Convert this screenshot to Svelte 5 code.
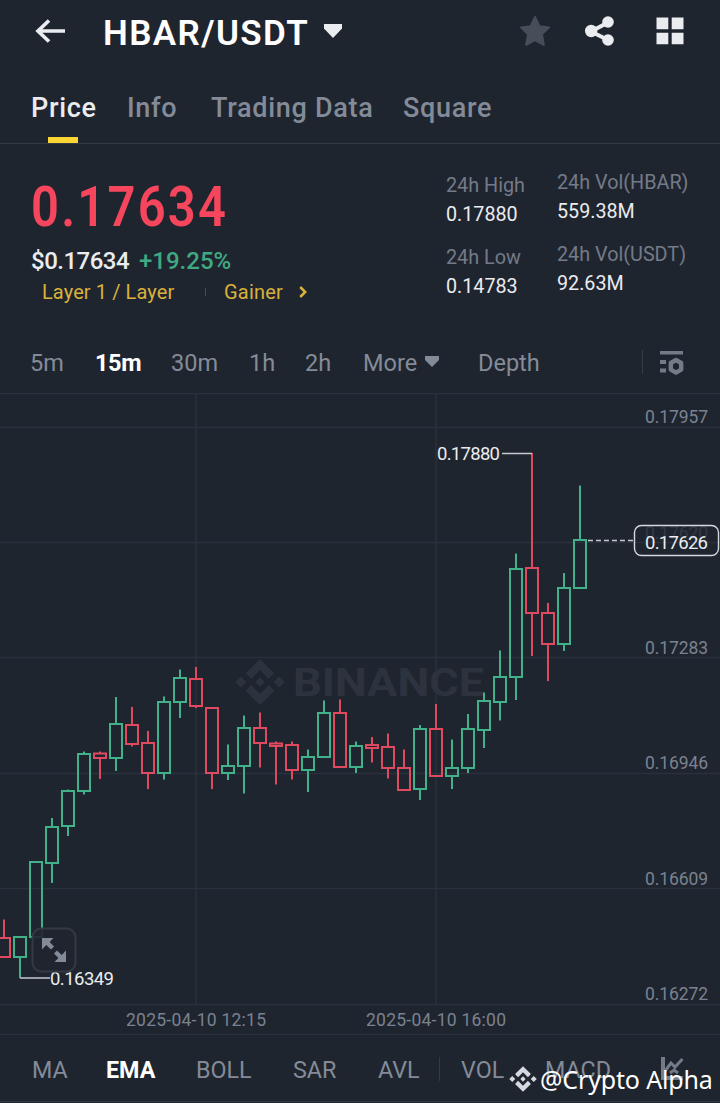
<script lang="ts">
	type Candle = [high: number, top: number, bottom: number, low: number, up: 0 | 1];

	const tabs = [
		{ label: 'Price', width: 96 },
		{ label: 'Info', width: 84 },
		{ label: 'Trading Data', width: 192 },
		{ label: 'Square', width: 100 },
	];

	const stats = [
		[['24h High', '0.17880'], ['24h Low', '0.14783']],
		[['24h Vol(HBAR)', '559.38M'], ['24h Vol(USDT)', '92.63M']],
	];

	const intervals = [
		{ label: '5m', width: 65 },
		{ label: '15m', width: 76 },
		{ label: '30m', width: 78 },
		{ label: '1h', width: 56 },
		{ label: '2h', width: 58 },
		{ label: 'More', width: 115 },
		{ label: 'Depth', width: 80 },
	];

	const indicators = [
		{ label: 'MA', width: 74 },
		{ label: 'EMA', width: 90 },
		{ label: 'BOLL', width: 97 },
		{ label: 'SAR', width: 85 },
		{ label: 'AVL', width: 61 },
		{ label: 'VOL', width: 84 },
		{ label: 'MACD', width: 80 },
	];

	const chartTop = 393;
	const step = 16;

	const candles: Candle[] = [
		[919.5, 938, 957, 957, 0],
		[936, 937, 957, 978, 1],
		[861, 862, 937, 937, 1],
		[818, 827, 863, 883, 1],
		[789.5, 791, 826, 836, 1],
		[751.5, 754, 791, 794.5, 1],
		[751.5, 753.5, 758, 779, 0],
		[697, 724, 758, 771, 1],
		[707, 725, 744, 746.5, 0],
		[731, 743, 773, 789, 0],
		[696.5, 702, 773, 779.5, 1],
		[669.5, 678, 702, 718, 1],
		[667, 679, 706, 708, 0],
		[707, 708, 773, 789, 0],
		[744.5, 766, 773, 780, 1],
		[715.5, 728, 766, 793.5, 1],
		[712.5, 728, 743, 767.5, 0],
		[741.5, 743.5, 746, 784.5, 0],
		[741.5, 745, 770, 779.5, 0],
		[749.5, 757, 770, 792, 1],
		[700.5, 713, 757, 757, 1],
		[699.5, 713, 767, 767, 0],
		[741.5, 746, 767, 773, 1],
		[737, 745, 748, 762.5, 0],
		[733.5, 747, 768, 778.5, 0],
		[749.5, 768, 790, 790, 0],
		[725, 729, 789, 800, 1],
		[704, 729, 776, 776, 0],
		[739.5, 768, 776, 789, 1],
		[714, 729, 768, 773, 1],
		[692.5, 701, 730, 748, 1],
		[650.5, 677, 702, 720.5, 1],
		[553.5, 569, 677, 700, 1],
		[453, 568, 613, 656, 0],
		[603, 613, 644, 681, 0],
		[573, 588, 644, 651, 1],
		[485.5, 540, 588, 588, 1],
	];

	const prices = [
		{ label: '0.17957', y: 427 },
		{ label: '0.17620', y: 542.5 },
		{ label: '0.17283', y: 657.8 },
		{ label: '0.16946', y: 773 },
		{ label: '0.16609', y: 888.5 },
		{ label: '0.16272', y: 1004 },
	];

	const times = [
		{ label: '2025-04-10 12:15', x: 196 },
		{ label: '2025-04-10 16:00', x: 436 },
	];

	let activeTab = $state('Price');
	let activeInterval = $state('15m');
	let activeIndicator = $state('EMA');
</script>

{#snippet logo()}
	<path d="M12 1 18.8 7.8 16.2 10.4 12 6.2 7.8 10.4 5.2 7.8Z" />
	<path d="M12 23 18.8 16.2 16.2 13.6 12 17.8 7.8 13.6 5.2 16.2Z" />
	<path d="M12 9.7 14.3 12 12 14.3 9.7 12ZM2.8 9.4 5.4 12 2.8 14.6 .2 12ZM21.2 9.4 23.8 12 21.2 14.6 18.6 12Z" />
{/snippet}

<main class="screen">
	<header class="topbar">
		<svg class="back" width="32" height="26" viewBox="0 0 32 26">
			<path d="M31 13H4M15 2.5 4 13 15 23.5" />
		</svg>
		<h1>HBAR/USDT</h1>
		<svg class="caret" width="20" height="15" viewBox="0 0 20 15">
			<path d="M1 0H19V4.5L10 14 1 4.5Z" />
		</svg>
		<div class="actions">
			<svg width="32" height="32" viewBox="0 0 32 32">
				<path class="star" d="M16 2 20.4 11.2 30 12.4 22.9 19.3 24.8 29.8 16 25.2 7.2 29.8 9.1 19.3 2 12.4 11.6 11.2Z" />
			</svg>
			<svg class="share" width="32" height="32" viewBox="0 0 32 32">
				<path class="link" d="M24 7.5 7 16.5 24 25" />
				<circle cx="24" cy="7" r="5.8" /><circle cx="7.2" cy="16" r="6.2" /><circle cx="24" cy="25" r="5.8" />
			</svg>
			<svg width="28" height="28" viewBox="0 0 28 28">
				<path d="M.5 .5H12.3V12.3H.5ZM15.7 .5H27.5V12.3H15.7ZM.5 15.7H12.3V27.3H.5ZM15.7 15.7H27.5V27.3H15.7Z" />
			</svg>
		</div>
	</header>

	<nav class="tabs">
		{#each tabs as tab}
			<button class:active={activeTab === tab.label} style="width:{tab.width}px" onclick={() => (activeTab = tab.label)}>
				<span>{tab.label}</span>
			</button>
		{/each}
	</nav>

	<section class="summary">
		<div class="quote">
			<div class="price">0.17634</div>
			<div class="change"><span class="usd">$0.17634</span><span class="pct">+19.25%</span></div>
			<div class="tags">
				<span class="layer">Layer 1 / Layer</span>
				<i></i>
				<span class="gainer">Gainer</span>
				<svg width="8" height="12" viewBox="0 0 8 12"><path d="M1.2 1 6.2 6 1.2 11" /></svg>
			</div>
		</div>
		{#each stats as column}
			<dl>
				{#each column as [name, value]}
					<dt>{name}</dt>
					<dd>{value}</dd>
				{/each}
			</dl>
		{/each}
	</section>

	<nav class="intervals">
		{#each intervals as item}
			<button class:active={activeInterval === item.label} style="width:{item.width}px" onclick={() => (activeInterval = item.label)}>
				{item.label}
				{#if item.label === 'More'}
					<svg width="14" height="11" viewBox="0 0 14 11"><path d="M0 0H14V4L7 11 0 4Z" /></svg>
				{/if}
			</button>
		{/each}
		<svg class="settings" width="44" height="28" viewBox="0 0 44 28">
			<path class="rule" d="M.5 2V26" />
			<path d="M18 3H41V6.6H18ZM18 12H24V16H18ZM18 20.5H24V24.5H18Z" />
			<path class="nut" d="M34 12 39.2 15V21.6L34 24.6 28.8 21.6V15Z" />
		</svg>
	</nav>

	<svg class="chart" width="720" height="642" viewBox="0 {chartTop} 720 642">
		<g class="grid">
			<path d="M0 393.5H720" />
			{#each prices as p}
				<path d="M0 {Math.floor(p.y)}.5H720" />
			{/each}
			{#each times as t}
				<path d="M{t.x} 393V1004" />
			{/each}
			<path d="M0 1034.5H720" />
		</g>

		<svg class="watermark" x="235" y="657" width="50" height="50" viewBox="0 0 24 24">{@render logo()}</svg>
		<text class="watermark brand" x="293" y="696" textLength="191" lengthAdjust="spacingAndGlyphs">BINANCE</text>

		{#each candles as [high, top, bottom, low, up], i}
			{@const x = 4 + i * step}
			<g class={up ? 'up' : 'down'}>
				<path d="M{x} {high}V{top}M{x} {bottom}V{low}" />
				<rect x={x - 6} y={top} width="12" height={bottom - top} />
			</g>
		{/each}

		{#each prices as p}
			<text class="axis" class:faint={p.label === '0.17620'} x="645" y={p.y - 4} textLength="63">{p.label}</text>
		{/each}
		{#each times as t}
			<text class="axis" x={t.x - 70} y="1026" textLength="140">{t.label}</text>
		{/each}

		<path class="leader" d="M502 453.5H532M20 978H50" />
		<text class="mark" x="437" y="460" textLength="63">0.17880</text>
		<text class="mark" x="50" y="985" textLength="64">0.16349</text>

		<path class="leader dashed" d="M588 540.5H634" />
		<rect class="tag" x="634.5" y="525.5" width="84" height="30" rx="7" />
		<text class="mark" x="645" y="549" textLength="63">0.17626</text>

		<g class="expand">
			<rect x="32.5" y="928.5" width="43" height="43" rx="9" />
			<path d="M42 938H53.5L49.6 942 54 946.5 51 949.5 46.3 945 42 949.5ZM66 962H54.5L58.4 958 54 953.5 57 950.5 61.7 955 66 950.5Z" />
		</g>
	</svg>

	<footer>
		{#each indicators as item}
			{#if item.label === 'VOL'}<i></i>{/if}
			<button class:active={activeIndicator === item.label} style="width:{item.width}px" onclick={() => (activeIndicator = item.label)}>
				{item.label}
			</button>
		{/each}
		<svg class="trend" width="24" height="24" viewBox="0 0 24 24">
			<path class="frame" d="M2 0V21H22" />
			<path d="M4 14 10 6 14 10 21.5 2M9 16 13 13 17 16" />
		</svg>
		<div class="credit">
			<svg width="28" height="28" viewBox="0 0 24 24">{@render logo()}</svg>
			<span>@Crypto Alpha</span>
		</div>
	</footer>
</main>

<style>
	:global(body) {
		background: #1f252f;
	}
	.screen {
		width: 720px;
		height: 1103px;
		overflow: hidden;
		background: #1f252f;
		color: #eaecef;
		font-family: Roboto, 'Liberation Sans', sans-serif;
		display: flex;
		flex-direction: column;
	}
	button {
		padding: 0;
		border: 0;
		background: none;
		color: #848b98;
		font: inherit;
		letter-spacing: inherit;
		text-align: left;
		white-space: nowrap;
		flex: none;
	}
	svg {
		display: block;
		flex: none;
	}
	.topbar {
		box-sizing: border-box;
		height: 63px;
		display: flex;
		align-items: center;
		padding: 0 36px 1px 34px;
	}
	.back path {
		fill: none;
		stroke: #eaecef;
		stroke-width: 3.7;
	}
	h1 {
		margin: 4px 0 0 37px;
		width: 220px;
		font-size: 35px;
		font-weight: 600;
		letter-spacing: 1.4px;
		color: #fff;
	}
	.caret { fill: #eaecef; }
	.actions {
		margin-left: auto;
		display: flex;
		align-items: center;
		gap: 33px;
		fill: #eaecef;
	}
	.share { margin-right: 7px; }
	.star {
		fill: #474d59;
		stroke: #474d59;
		stroke-width: 2;
		stroke-linejoin: round;
	}
	.link {
		fill: none;
		stroke: #eaecef;
		stroke-width: 4;
	}
	.tabs {
		box-sizing: border-box;
		height: 81px;
		display: flex;
		padding-left: 31px;
		border-bottom: 1px solid #343a45;
		font-size: 27px;
		font-weight: 500;
		letter-spacing: 0.7px;
	}
	.tabs button {
		position: relative;
		padding-top: 10px;
	}
	.tabs .active { color: #eaecef; }
	.tabs .active::after {
		content: '';
		position: absolute;
		left: 17px;
		bottom: 0;
		width: 30px;
		height: 6px;
		background: #fcd535;
	}
	.summary {
		height: 188px;
		display: flex;
	}
	.quote {
		width: 415px;
		padding: 31px 0 0 31px;
	}
	.price {
		width: fit-content;
		font-size: 55.5px;
		line-height: 66px;
		font-weight: 600;
		letter-spacing: 2.5px;
		color: #f6465d;
		transform: scaleX(0.882);
		transform-origin: left;
	}
	.change {
		display: flex;
		margin-top: 5px;
		font-size: 24px;
		line-height: 30px;
		font-weight: 500;
	}
	.usd {
		width: 108px;
		letter-spacing: -0.5px;
	}
	.pct { color: #3fa981; }
	.tags {
		display: flex;
		align-items: center;
		padding-left: 11px;
		margin-top: 3px;
		font-size: 20px;
		line-height: 26px;
		color: #d9b13b;
	}
	.layer {
		width: 163px;
		letter-spacing: 0.1px;
	}
	.tags i {
		width: 1px;
		height: 8px;
		background: #474d59;
	}
	.gainer {
		width: 75px;
		margin-left: 18px;
		letter-spacing: 0.2px;
	}
	.tags path {
		fill: none;
		stroke: #d9b13b;
		stroke-width: 2.5;
	}
	dl {
		width: 111px;
		margin: 28px 0 0;
		white-space: nowrap;
	}
	dl:last-child { margin-top: 25px; }
	dt {
		font-size: 19.8px;
		line-height: 28px;
		color: #747b88;
	}
	dd {
		margin: 0 0 16px;
		font-size: 19.7px;
		line-height: 29px;
	}
	dd + dt { margin-top: -1px; }
	.intervals {
		box-sizing: border-box;
		height: 61px;
		display: flex;
		align-items: center;
		padding: 1px 0 0 30px;
		font-size: 23.5px;
	}
	.intervals button:nth-child(6) {
		display: flex;
		align-items: center;
		gap: 8px;
	}
	.intervals button svg {
		margin-bottom: 3px;
		fill: #848b98;
	}
	.intervals .active {
		font-weight: 700;
		color: #fff;
		letter-spacing: -0.4px;
	}
	.settings {
		margin: 0 0 2px 84px;
		fill: #747b88;
	}
	.rule { stroke: #343a45; }
	.nut {
		fill: none;
		stroke: #747b88;
		stroke-width: 4.4;
		stroke-linejoin: round;
	}
	.grid path {
		stroke: #2b313c;
		stroke-width: 1.4;
	}
	.watermark { fill: #2d333e; }
	.brand {
		font-size: 39px;
		font-weight: 700;
	}
	.up, .down {
		fill: none;
		stroke-width: 2;
	}
	.up { stroke: #42b088; }
	.down { stroke: #df4a60; }
	.axis {
		font-size: 17.5px;
		fill: #7b828f;
	}
	.faint { fill: #343a45; }
	.mark {
		font-size: 18.5px;
		fill: #eaecef;
	}
	.leader {
		fill: none;
		stroke: #c5c9d1;
		stroke-width: 1.3;
	}
	.dashed { stroke-dasharray: 5 3; }
	.tag {
		fill: none;
		stroke: #d5d8de;
		stroke-width: 1.4;
	}
	.expand rect {
		fill: #1f252f;
		fill-opacity: 0.9;
		stroke: #343a45;
		stroke-width: 2;
	}
	.expand path { fill: #848b98; }
	footer {
		box-sizing: border-box;
		position: relative;
		height: 67px;
		display: flex;
		align-items: center;
		padding: 4px 0 0 32px;
		border-bottom: 1px solid #343a45;
		font-size: 23.3px;
	}
	footer .active { font-weight: 700; color: #fff; }
	footer i {
		width: 1px;
		height: 24px;
		margin: 0 21px 2px 0;
		background: #343a45;
	}
	.trend {
		fill: none;
		stroke: #747b88;
		stroke-width: 3;
		margin: 0 0 2px 36px;
	}
	.frame { stroke-width: 4; }
	.credit {
		position: absolute;
		left: 509px;
		top: 27px;
		display: flex;
		align-items: center;
		gap: 3px;
		font-family: 'Noto Sans', sans-serif;
		font-size: 25px;
		line-height: 34px;
		letter-spacing: -0.15px;
		color: #fff;
		white-space: nowrap;
	}
	.credit svg { fill: #d5d8de; }
</style>
